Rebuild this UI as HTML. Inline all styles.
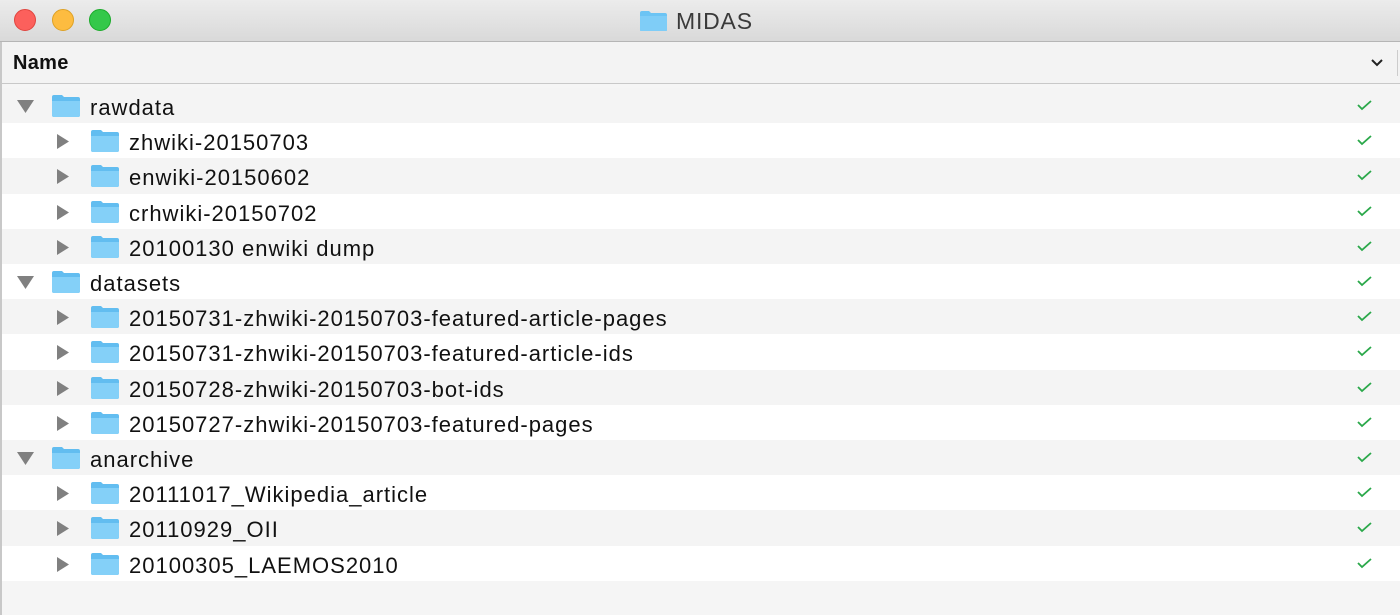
<!DOCTYPE html><html><head><style>
body{margin:0;width:1400px;height:615px;overflow:hidden;background:#f5f5f5;font-family:"Liberation Sans",sans-serif;}
.title{position:absolute;left:0;top:0;width:1400px;height:41px;background:linear-gradient(#ececec,#d9d9d9);border-bottom:1px solid #b5b5b5;}
.dot{position:absolute;top:9px;width:22px;height:22px;border-radius:50%;}
.tt{position:absolute;left:676px;top:8px;font-size:23px;letter-spacing:0.8px;color:#3a3a3a;}
.hdr{position:absolute;left:2px;top:42px;width:1398px;height:41px;background:#f3f3f3;border-bottom:1px solid #c8c8c8;}
.hdr b{position:absolute;left:11px;top:10px;font-size:20px;letter-spacing:0.3px;color:#111;}
.row{position:absolute;left:2px;width:1398px;height:35.2px;}
.row span{position:absolute;top:7px;font-size:22px;letter-spacing:1px;color:#111;}
.ck{position:absolute;left:1355px;top:11px;}
.lb{position:absolute;left:0;top:42px;width:2px;height:573px;background:#c8c8c8;}
</style></head><body>
<div class="title">
<div class="dot" style="left:14px;background:#fc605c;border:1px solid #e0443e;width:20px;height:20px"></div>
<div class="dot" style="left:52px;background:#fdbc40;border:1px solid #dea123;width:20px;height:20px"></div>
<div class="dot" style="left:89px;background:#34c84a;border:1px solid #1aab29;width:20px;height:20px"></div>
<svg style="position:absolute;left:639px;top:10px" width="29" height="22"><path d="M1 3q0-2 2-2h7l2 2h14q2 0 2 2v15q0 1-1 1H2q-1 0-1-1z" fill="#6cc4f4"/><path d="M1 6h27v14q0 1-1 1H2q-1 0-1-1z" fill="#7fcdf7"/></svg>
<div class="tt">MIDAS</div>
</div>
<div class="hdr"><b>Name</b>
<svg style="position:absolute;left:1368px;top:16px" width="14" height="10"><path d="M2 2l5 5 5-5" stroke="#222" stroke-width="2" fill="none"/></svg>
<div style="position:absolute;left:1395px;top:8px;width:1px;height:26px;background:#ccc"></div></div>
<div class="lb"></div>
<div id="rows"></div>
<script>
var d=[[0,"rawdata"],[1,"zhwiki-20150703"],[1,"enwiki-20150602"],[1,"crhwiki-20150702"],[1,"20100130 enwiki dump"],[0,"datasets"],[1,"20150731-zhwiki-20150703-featured-article-pages"],[1,"20150731-zhwiki-20150703-featured-article-ids"],[1,"20150728-zhwiki-20150703-bot-ids"],[1,"20150727-zhwiki-20150703-featured-pages"],[0,"anarchive"],[1,"20111017_Wikipedia_article"],[1,"20110929_OII"],[1,"20100305_LAEMOS2010"]];
var h="";
d.forEach(function(r,i){var top=88+i*35.2;var bg=i%2?"#fff":"#f4f4f4";var fx=r[0]?88:49;
h+='<div class="row" style="top:'+top+'px;background:'+bg+'">';
if(r[0])h+='<svg style="position:absolute;left:54px;top:10px" width="14" height="17"><path d="M1 1L13 8.5 1 16z" fill="#808080"/></svg>';
else h+='<svg style="position:absolute;left:14px;top:11px" width="19" height="15"><path d="M1 1h17L9.5 14z" fill="#808080"/></svg>';
h+='<svg style="position:absolute;left:'+fx+'px;top:6px" width="30" height="24"><path d="M1 3q0-2 2-2h8l2 2h14q2 0 2 2v16q0 2-2 2H3q-2 0-2-2z" fill="#62bdf0"/><path d="M1 7h28v14q0 2-2 2H3q-2 0-2-2z" fill="#84d0f8"/></svg>';
h+='<span style="left:'+(fx+39)+'px">'+r[1]+'</span>';
h+='<svg class="ck" width="16" height="12"><path d="M1 6l4 4 9-8" stroke="#2aa84a" stroke-width="1.8" fill="none"/></svg></div>';});
document.getElementById("rows").innerHTML=h;
</script>
</body></html>
